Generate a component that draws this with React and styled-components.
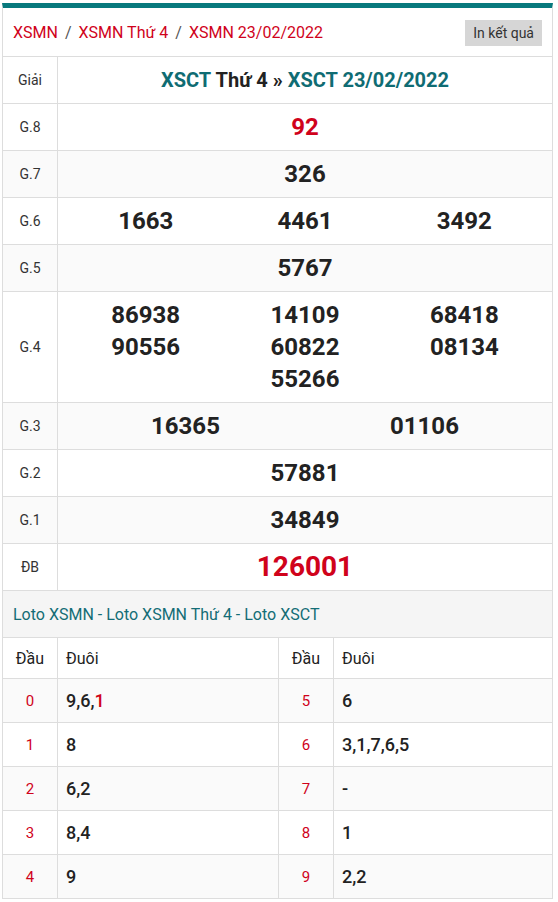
import styled, { createGlobalStyle } from "styled-components";

const Global = createGlobalStyle`
    body {
        margin: 0;
        background: #fff;
        font-family: Roboto, "Liberation Sans", Arial, sans-serif;
        color: #222;
    }
`

const prizes = [
    { label: "G.8", nums: ["92"], red: true },
    { label: "G.7", nums: ["326"] },
    { label: "G.6", nums: ["1663", "4461", "3492"] },
    { label: "G.5", nums: ["5767"] },
    { label: "G.4", nums: ["86938", "14109", "68418", "90556", "60822", "08134", "55266"], wrap: true },
    { label: "G.3", nums: ["16365", "01106"] },
    { label: "G.2", nums: ["57881"] },
    { label: "G.1", nums: ["34849"] },
    { label: "ĐB", nums: ["126001"], red: true, big: true },
]

const loto = [
    [["0", "9,6,"], ["5", "6"]],
    [["1", "8"], ["6", "3,1,7,6,5"]],
    [["2", "6,2"], ["7", "-"]],
    [["3", "8,4"], ["8", "1"]],
    [["4", "9"], ["9", "2,2"]],
]

export default function App(){
    return(
        <>
            <Global/>
            <Box>
                <Header>
                    <Crumbs>
                        <a>XSMN</a><span>/</span><a>XSMN Thứ 4</a><span>/</span><a>XSMN 23/02/2022</a>
                    </Crumbs>
                    <PrintButton>In kết quả</PrintButton>
                </Header>
                <Row>
                    <Label>Giải</Label>
                    <Title><a>XSCT</a> Thứ 4 » <a>XSCT 23/02/2022</a></Title>
                </Row>
                {prizes.map((p, i) => (
                    <Row key={p.label} $alt={i % 2 === 1}>
                        <Label>{p.label}</Label>
                        <Numbers $cols={p.nums.length} $wrap={p.wrap}>
                            {p.nums.map((n, j) => <Num key={j} $red={p.red} $big={p.big} $wrap={p.wrap}>{n}</Num>)}
                        </Numbers>
                    </Row>
                ))}
                <LotoLinks>
                    <a>Loto XSMN</a> - <a>Loto XSMN Thứ 4</a> - <a>Loto XSCT</a>
                </LotoLinks>
                <LotoRow $head>
                    <Head>Đầu</Head><Tail $head>Đuôi</Tail>
                    <Head>Đầu</Head><Tail $head>Đuôi</Tail>
                </LotoRow>
                {loto.map((r, i) => (
                    <LotoRow key={i} $alt={i % 2 === 0}>
                        {r.map(([h, t]) => [
                            <Head key={"h" + h} $red>{h}</Head>,
                            <Tail key={"t" + h}>{t}{h === "0" ? <em>1</em> : null}</Tail>
                        ])}
                    </LotoRow>
                ))}
            </Box>
        </>
    )
}

const Box = styled.div`
    width: 551px;
    margin: 3px 0 0 2px;
    box-sizing: border-box;
    border-top: 5px solid #08797d;
    border-left: 1px solid #ddd;
    border-right: 1px solid #ddd;
`

const Header = styled.div`
    height: 49px;
    box-sizing: border-box;
    border-bottom: 1px solid #ddd;
    display: flex;
    align-items: center;
    justify-content: space-between;
    padding: 0 10px 0 10px;
`

const Crumbs = styled.div`
    font-size: 16px;
    display: flex;
    align-items: center;

    a {
        color: #d0021b;
    }
    span {
        color: #555;
        margin: 0 7px;
    }
`

const PrintButton = styled.div`
    background: #d6d6d6;
    color: #333;
    font-size: 14px;
    height: 26px;
    line-height: 26px;
    padding: 0 8px;
    margin-top: 1px;
`

const Row = styled.div`
    display: grid;
    grid-template-columns: 55px 1fr;
    border-bottom: 1px solid #ddd;
    background: ${p => p.$alt ? "#fafafa" : "#fff"};
    min-height: 46px;
`

const Label = styled.div`
    border-right: 1px solid #ddd;
    display: flex;
    align-items: center;
    justify-content: center;
    font-size: 14px;
    color: #333;
`

const Title = styled.div`
    display: flex;
    align-items: center;
    justify-content: center;
    font-size: 20px;
    font-weight: 700;
    color: #222;
    white-space: pre;

    a {
        color: #0f6c73;
    }
`

const Numbers = styled.div`
    padding: ${p => p.$wrap ? "7px 8px" : "0 8px"};
    display: ${p => p.$wrap ? "flex" : "grid"};
    flex-wrap: wrap;
    justify-content: center;
    grid-template-columns: repeat(${p => p.$cols}, 1fr);
    align-items: center;
`

const Num = styled.div`
    text-align: center;
    font-weight: 700;
    font-size: ${p => p.$big ? "28px" : "24px"};
    line-height: 32px;
    color: ${p => p.$red ? "#d0021b" : "#222"};
    width: ${p => p.$wrap ? "33.333%" : "auto"};
`

const LotoLinks = styled.div`
    height: 47px;
    box-sizing: border-box;
    border-bottom: 1px solid #ddd;
    background: #f5f5f5;
    display: flex;
    align-items: center;
    padding-left: 10px;
    font-size: 16px;
    color: #136d76;
    white-space: pre;
`

const LotoRow = styled.div`
    display: grid;
    grid-template-columns: 55px 221px 55px 1fr;
    height: ${p => p.$head ? "41px" : "44px"};
    box-sizing: border-box;
    border-bottom: 1px solid #ddd;
    background: ${p => p.$alt ? "#fafafa" : "#fff"};
`

const Head = styled.div`
    border-right: 1px solid #ddd;
    display: flex;
    align-items: center;
    justify-content: center;
    font-size: ${p => p.$red ? "15px" : "16px"};
    color: ${p => p.$red ? "#d0021b" : "#222"};
`

const Tail = styled.div`
    display: flex;
    align-items: center;
    padding-left: 8px;
    font-size: ${p => p.$head ? "16px" : "18px"};
    font-weight: ${p => p.$head ? 400 : 500};
    color: #222;

    &:nth-child(2) {
        border-right: 1px solid #ddd;
    }

    em {
        font-style: normal;
        color: #d0021b;
    }
`
